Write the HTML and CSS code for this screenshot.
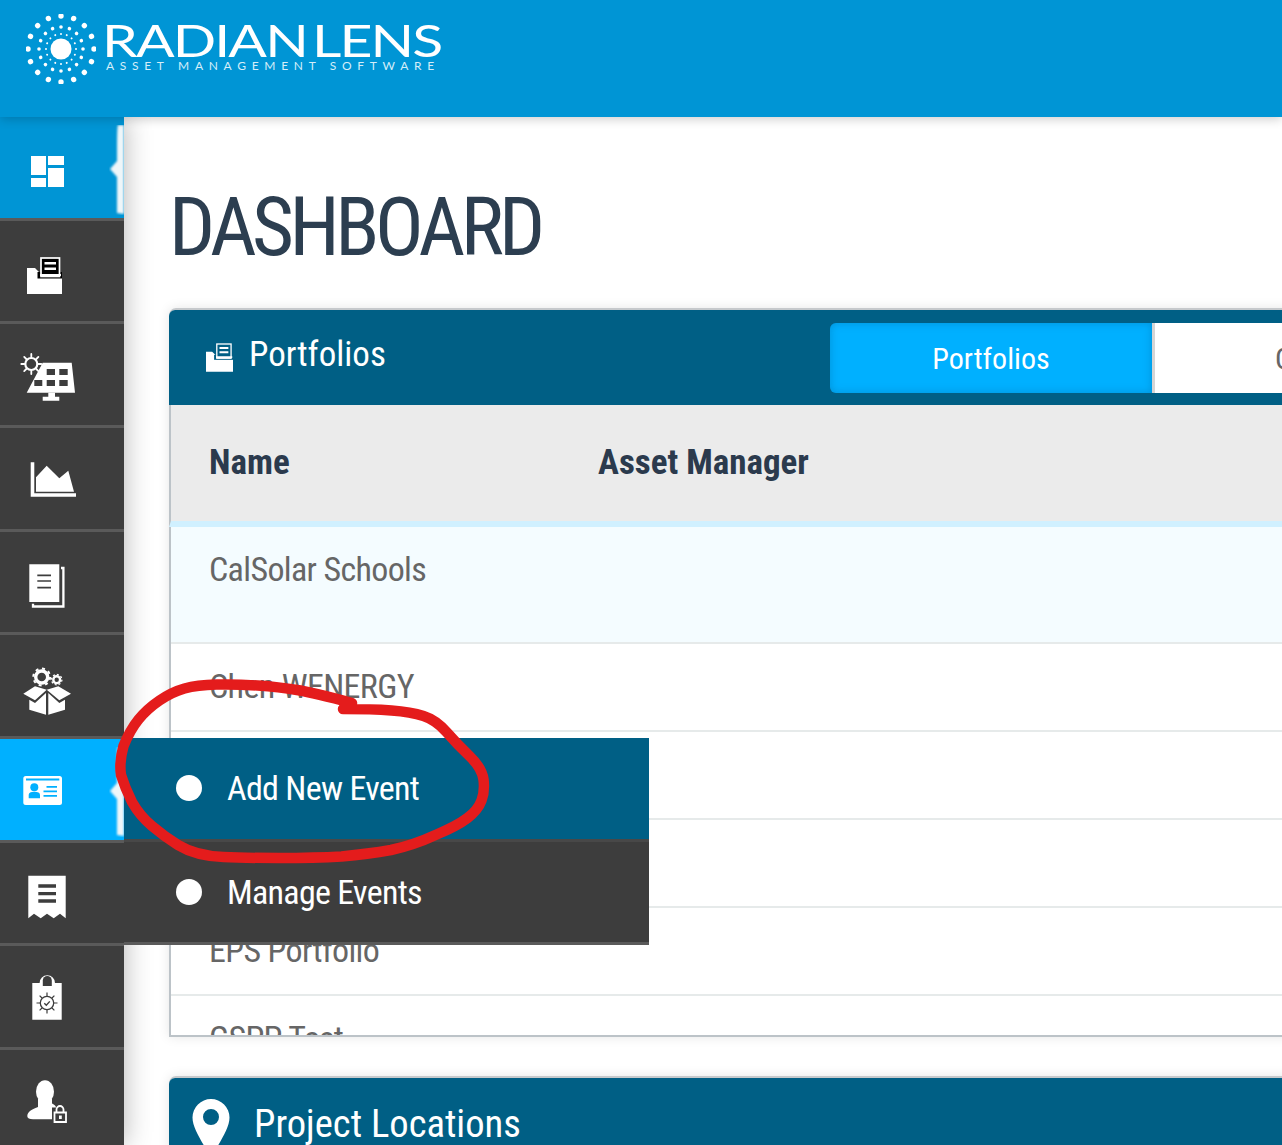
FILE: index.html
```html
<!DOCTYPE html>
<html lang="en">
<head>
<meta charset="utf-8">
<title>Radian Lens Dashboard</title>
<link rel="stylesheet" href="styles.css">
</head>
<body>
<svg class="defs" width="0" height="0" aria-hidden="true">
  <defs>
    <symbol id="portfolio" viewBox="11 12 35 37">
      <path fill="#fff" d="M11 23h8l5 5h22v21H11z"/>
      <rect x="21.500" y="27" width="25" height="6.500" fill="currentColor"/>
      <rect x="25" y="13" width="18.500" height="18.500" fill="currentColor" stroke="#fff" stroke-width="1.700"/>
      <path fill="#fff" d="M28.500 17h11.500v2.500H28.500zM28.500 22.500h11.500v2.500H28.500zM24 29h21v2H24z"/>
    </symbol>
  </defs>
</svg>
<div class="page">
  <header class="top">
    <svg class="burst" viewBox="0 0 70 70" width="70" height="70" aria-hidden="true">
      <defs>
        <g id="ray">
          <circle cx="35" cy="2" r="2.700"/>
          <circle cx="35" cy="13" r="1.800"/>
          <circle cx="35" cy="20" r="1"/>
        </g>
      </defs>
      <g fill="#fff">
        <circle cx="35" cy="35" r="10.500"/>
        <use href="#ray"/>
        <use href="#ray" transform="rotate(22.500 35 35)"/>
        <use href="#ray" transform="rotate(45 35 35)"/>
        <use href="#ray" transform="rotate(67.500 35 35)"/>
        <use href="#ray" transform="rotate(90 35 35)"/>
        <use href="#ray" transform="rotate(112.500 35 35)"/>
        <use href="#ray" transform="rotate(135 35 35)"/>
        <use href="#ray" transform="rotate(157.500 35 35)"/>
        <use href="#ray" transform="rotate(180 35 35)"/>
        <use href="#ray" transform="rotate(202.500 35 35)"/>
        <use href="#ray" transform="rotate(225 35 35)"/>
        <use href="#ray" transform="rotate(247.500 35 35)"/>
        <use href="#ray" transform="rotate(270 35 35)"/>
        <use href="#ray" transform="rotate(292.500 35 35)"/>
        <use href="#ray" transform="rotate(315 35 35)"/>
        <use href="#ray" transform="rotate(337.500 35 35)"/>
      </g>
    </svg>
    <div class="brand">
      <div class="brand-name">RADIAN LENS</div>
      <div class="brand-sub">ASSET MANAGEMENT SOFTWARE</div>
    </div>
  </header>
  <div class="body">
    <nav class="side">
      <div class="item item-home">
        <svg class="ic" viewBox="0 0 60 60" aria-hidden="true"><path fill="#fff" d="M15 15h15v19H15zM15 37h15v9H15zM32 15h16v9H32zM32 27h16v19H32z"/></svg>
        <svg class="notch" viewBox="0 0 15 90" aria-hidden="true"><path class="notch-shape" d="M15 0H9Q8 1 8 24v12L1 44l7 8v36l7 1z"/></svg>
      </div>
      <div class="item">
        <svg class="ic" viewBox="0 0 60 60" aria-hidden="true"><use href="#portfolio" x="11" y="12" width="35" height="37"/></svg>
      </div>
      <div class="item">
        <svg class="ic" viewBox="0 0 60 60" aria-hidden="true">
          <circle cx="15.300" cy="16" r="6" fill="none" stroke="#fff" stroke-width="2.200"/>
          <path stroke="#fff" stroke-width="1.800" stroke-linecap="round" d="M15.300 6v3M15.300 23v3M5.300 16h3M22.300 16h3M8.200 8.900l2.100 2.100M20.300 21l2.100 2.100M22.400 8.900L20.300 11M10.300 21l-2.100 2.100"/>
          <path fill="#fff" fill-rule="evenodd" d="M26.700 14.700h29L59 44.700H10.700zM30.700 21v6H39v-6zM43.300 21v6h8.400v-6zM18.300 32v6h8v-6zM30.700 32v6H39v-6zM43.300 32v6h8.400v-6z"/>
          <path fill="#fff" d="M32.300 44.700H39v4h4.300v4H26.700v-4h5.600z"/>
        </svg>
      </div>
      <div class="item">
        <svg class="ic" viewBox="0 0 60 60" aria-hidden="true">
          <path fill="#fff" d="M14.700 10.300h3.600v31h42.700v3.400H14.700zM20 39.700V25.300l10.700-11.600 12.600 12.600 9-7.600L58 39.700z"/>
        </svg>
      </div>
      <div class="item">
        <svg class="ic" viewBox="0 0 60 60" aria-hidden="true">
          <path fill="none" stroke="#fff" stroke-width="2.300" d="M45 12h2.400v38.500H17v-2.700"/>
          <path fill="#fff" d="M13.300 8.300h30V46h-30z"/>
          <path stroke="#3d3d3d" stroke-width="1.700" d="M21.300 19.300H35M21.300 25H35M21.300 31.700H35"/>
        </svg>
      </div>
      <div class="item">
        <svg class="ic" viewBox="0 0 60 60" aria-hidden="true">
          <circle cx="25.700" cy="18" r="6" fill="none" stroke="#fff" stroke-width="3.400"/>
          <circle cx="25.700" cy="18" r="8.400" fill="none" stroke="#fff" stroke-width="2" stroke-dasharray="3 3.600"/>
          <circle cx="40.700" cy="20.700" r="3.400" fill="none" stroke="#fff" stroke-width="2.400"/>
          <circle cx="40.700" cy="20.700" r="5.200" fill="none" stroke="#fff" stroke-width="1.300" stroke-dasharray="2 2"/>
          <path fill="#fff" d="M7.300 34.700L19 27.300l11.700 3.400L19 41.300zM55 34.700l-12.700-7.400-11.600 3.400 12.600 10.600zM13.300 40.700l5.700 3.300 11-10v21.700l-16.700-5zM32.300 34l11 10 5.700-3.300v10l-16.700 5z"/>
        </svg>
      </div>
      <div class="item item-active">
        <svg class="ic" viewBox="0 0 60 60" aria-hidden="true">
          <rect x="7.300" y="13" width="38.700" height="29" rx="2.500" fill="#fff"/>
          <g fill="#00b0ff">
            <path d="M10 15.500h33.300v2H10z"/>
            <circle cx="18.300" cy="24.300" r="4"/>
            <path d="M12.700 35.300v-3.500c0-2 2-3.100 5.600-3.100s5.700 1.100 5.700 3.100v3.500z"/>
            <path d="M30.500 23h10.500v1.700H30.500zM27.500 27.500h13.500v1.700H27.500zM27.500 32h13.500v1.700H27.500z"/>
          </g>
        </svg>
        <svg class="notch" viewBox="0 0 15 90" aria-hidden="true"><path class="notch-shape" d="M15 0H9Q8 1 8 24v12L1 44l7 8v36l7 1z"/></svg>
        <div class="flyout">
          <a class="fly-row fly-on"><span class="dot"></span><span class="cond fly-text">Add New Event</span></a>
          <a class="fly-row"><span class="dot"></span><span class="cond fly-text">Manage Events</span></a>
        </div>
      </div>
      <div class="item">
        <svg class="ic" viewBox="0 0 60 60" aria-hidden="true">
          <path fill="#fff" d="M12.300 8.700h37.400v42.600L44 46.700l-6.300 4.600-6.700-4.600-6.300 4.600-6.700-4.600-5.700 4.600z"/>
          <path fill="#3d3d3d" d="M22.300 17.300H40v3.400H22.300zM22.300 25H40v3.300H22.300zM22.300 32.300H40v3.400H22.300z"/>
        </svg>
      </div>
      <div class="item">
        <svg class="ic" viewBox="0 0 60 60" aria-hidden="true">
          <path fill="#fff" d="M16.300 13h7.300a7.700 7.700 0 0 1 15.400 0h6.700v36.700H16.300z"/>
          <path fill="#3d3d3d" d="M26.800 16V10.500a4.500 4.500 0 0 1 9 0V16z"/>
          <circle cx="31" cy="33" r="6.700" fill="none" stroke="#3d3d3d" stroke-width="1.300"/>
          <path stroke="#3d3d3d" stroke-width="1.200" d="M31 22.500v3.500M31 40v3.500M20.500 33H24M38 33h3.500M23.600 25.600l2.400 2.400M36 38l2.400 2.400M38.400 25.600L36 28M26 38l-2.400 2.400"/>
          <path fill="none" stroke="#3d3d3d" stroke-width="1.400" d="M28.300 33.200l2 2 3.500-3.800"/>
        </svg>
      </div>
      <div class="item">
        <svg class="ic" viewBox="0 0 60 60" aria-hidden="true">
          <ellipse cx="29" cy="17.700" rx="9" ry="11.500" fill="#fff"/>
          <path fill="#fff" d="M22 25h14v4.500c3 1.500 4.700 3 4.700 7v8.800H17c-3.500 0-5.700-1-5.700-3 0-3.800 3.600-6.800 10.700-9.200z"/>
          <path fill="none" stroke="#3d3d3d" stroke-width="5" d="M38.500 36h11v12h-11z"/>
          <path fill="none" stroke="#fff" stroke-width="1.800" d="M40 38.500h10v9.500H38.500v-9.500h1.500M40.500 38v-2.500a3.500 3.500 0 0 1 7 0V38"/>
          <path fill="#fff" d="M43 41.500h2.800V45H43z"/>
        </svg>
      </div>
    </nav>
    <main class="main">
      <h1 class="cond title">DASHBOARD</h1>
      <section class="panel">
        <div class="panel-head">
          <div class="head-title">
            <svg class="head-ic" viewBox="0 0 27 29" aria-hidden="true"><use href="#portfolio" width="27" height="29"/></svg>
            <span class="cond head-text">Portfolios</span>
          </div>
          <div class="toggle">
            <button class="cond tab tab-on">Portfolios</button>
            <button class="cond tab">Clients</button>
          </div>
        </div>
        <div class="table-head">
          <span class="cond col-name">Name</span>
          <span class="cond col-mgr">Asset Manager</span>
        </div>
        <div class="rows">
          <div class="row row-sel"><span class="cond cell">CalSolar Schools</span></div>
          <div class="row"><span class="cond cell">Chen WENERGY</span></div>
          <div class="row"><span class="cond cell">CleanPower Fund</span></div>
          <div class="row"><span class="cond cell">DG Portfolio</span></div>
          <div class="row"><span class="cond cell">EPS Portfolio</span></div>
          <div class="row"><span class="cond cell">GSPP Test</span></div>
        </div>
      </section>
      <section class="panel panel-map">
        <div class="map-head">
          <svg class="pin" viewBox="0 0 38 60" aria-hidden="true"><path fill="#fff" fill-rule="evenodd" d="M19 0a18.500 18.500 0 0 1 18.500 18.500C37.500 31 25 46 19 60 13 46 .5 31 .5 18.500A18.500 18.500 0 0 1 19 0zm0 10a8 8 0 1 0 0 16 8 8 0 0 0 0-16z"/></svg>
          <span class="cond map-text">Project Locations</span>
        </div>
      </section>
    </main>
  </div>
  <svg class="scribble" viewBox="0 0 1282 1145" aria-hidden="true">
    <path d="M352 703Q315 693 297 690Q279 687 257.500 685.500Q236 684 216.500 684.500Q197 685 184.500 688.500Q172 692 159.500 700.500Q147 709 138.500 719.500Q130 730 123.500 746Q119 762 121 775Q125 788 132 802Q140 816 152 826Q165 837 178 845Q196 856 223.500 857Q243 858 279 858Q315 858 341.500 856.500Q368 854 391 850Q414 845 435.500 835Q457 826 467.500 818Q478 810 481.500 800.500Q485 791 483.500 779.500Q482 768 469.500 756Q457 744 446.500 732Q436 720 423.500 716Q411 712 391.500 710.500Q372 709 343 709"/>
  </svg>
</div>
</body>
</html>
```

FILE: styles.css
```css
* { box-sizing: border-box; }
html, body { margin: 0; height: 1145px; overflow: hidden; background: #fff; }
body { font-family: "Roboto Condensed", Roboto, "Liberation Sans", sans-serif; }
.defs { position: absolute; }
.cond { font-family: "Roboto Condensed", Roboto, "Liberation Sans", sans-serif; font-stretch: condensed; }
.page { position: relative; height: 1145px; overflow: hidden; display: flex; flex-direction: column; }

.top { flex: 0 0 117px; background: #0095d5; display: flex; align-items: flex-start; padding: 14px 0 0 26px; position: relative; z-index: 3; box-shadow: 0 2px 10px rgba(0,0,0,.2); }
.burst { display: block; }
.brand { margin-left: 8px; color: #fff; }
.brand-name { font-family: Lato, sans-serif; font-weight: 400; font-size: 45px; line-height: 34px; margin: 9px 0 0 -2px; white-space: nowrap; letter-spacing: -1.500px; word-spacing: -6px; transform: scaleX(1.27); transform-origin: 0 50%; }
.brand-sub { font-family: Lato, sans-serif; font-size: 12px; line-height: 14px; letter-spacing: 5.700px; white-space: nowrap; margin-top: 2px; color: #d5eef9; padding-left: 2px; }

.body { flex: 1; display: flex; min-height: 0; }
.side { flex: 0 0 124px; position: relative; z-index: 2; background: #3d3d3d; box-shadow: 0 0 26px rgba(0,0,0,.3); }
.item { height: 103.67px; border-bottom: 3px solid #5a5a5a; position: relative; }
.item-home { background: #0095d5; }
.item-active { background: #00b0ff; }
.ic { display: block; width: 60px; height: 60px; position: absolute; top: 24px; left: 16px; }
.notch { position: absolute; right: 0; top: 8px; width: 15px; height: 90px; }
.notch-shape { fill: #eef6f9; filter: blur(.8px); }

.flyout { position: absolute; left: 124px; top: -1px; width: 525px; }
.fly-row { height: 103.500px; display: flex; align-items: center; padding: 0 0 0 52px; background: #3d3d3d; border-bottom: 3px solid #5a5a5a; color: #fff; }
.fly-on { height: 104px; background: #005f85; border-bottom-color: #484848; }
.dot { width: 26px; height: 26px; border-radius: 50%; background: #fff; flex: none; }
.fly-text { font-size: 34px; letter-spacing: -.7px; margin-left: 25px; white-space: nowrap; }

.main { flex: 1; min-width: 0; overflow: hidden; padding: 0 0 0 45px; background: #fff; }
.title { margin: 70px 0 0; font-size: 81px; line-height: 81px; font-weight: 400; letter-spacing: -4.500px; color: #2c3e50; white-space: nowrap; }
.panel { width: 1300px; margin-top: 40px; border-top: 2px solid #c6c9cc; border-radius: 7px 0 0 0; box-shadow: 0 0 12px rgba(0,0,0,.1); }
.panel-head { height: 95px; background: #005f85; border-radius: 6px 0 0 0; display: flex; align-items: flex-start; }
.head-title { width: 661px; flex: none; display: flex; align-items: flex-start; color: #005f85; }
.head-ic { width: 27px; height: 29px; margin: 33px 0 0 37px; flex: none; }
.head-text { color: #fff; font-size: 35px; line-height: 40px; margin: 25px 0 0 16px; }
.toggle { display: flex; margin-top: 13px; }
.tab { width: 322px; height: 70px; border: 0; padding: 0; font-size: 30px; background: #fff; color: #666; flex: none; }
.tab-on { width: 325px; background: #00b0ff; color: #fff; border-radius: 6px 0 0 6px; border-right: 3px solid #d5d5d5; box-shadow: inset 0 0 8px rgba(0,90,140,.35); }
.table-head { height: 122px; border-left: 2px solid #bcc3c8; background: #ebebeb; border-bottom: 6px solid #d0f0ff; display: flex; align-items: center; padding-bottom: 2px; color: #2b3a4d; font-weight: 700; font-size: 35px; }
.col-name { width: 389px; margin-left: 38px; }
.rows { height: 510px; overflow: hidden; border-left: 2px solid #bcc3c8; border-bottom: 2px solid #bcc3c8; }
.row { height: 88px; border-bottom: 2px solid #e6eaea; padding: 20px 0 0 38px; }
.row-sel { height: 117px; background: #f4fcff; padding-top: 20px; }
.cell { font-size: 34px; line-height: 44px; letter-spacing: -.65px; color: #666; display: block; }
.panel-map { margin-top: 39px; height: 120px; }
.map-head { height: 200px; background: #005f85; border-radius: 6px 0 0 0; display: flex; align-items: flex-start; padding-left: 23px; }
.pin { width: 38px; height: 60px; margin-top: 21px; flex: none; }
.map-text { font-size: 38.600px; line-height: 44px; color: #fff; margin: 24px 0 0 24px; }

.scribble { position: absolute; left: 0; top: 0; width: 1282px; height: 1145px; z-index: 5; pointer-events: none; }
.scribble path { fill: none; stroke: #e41c1c; stroke-width: 10.500px; stroke-linecap: round; stroke-linejoin: round; }
```
